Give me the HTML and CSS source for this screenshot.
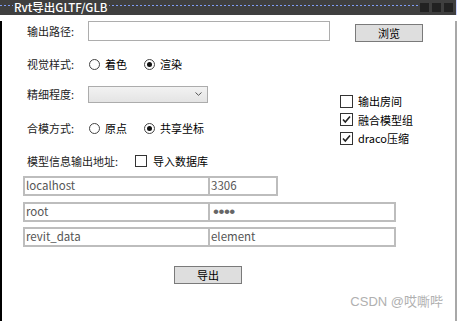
FILE: index.html
```html
<!DOCTYPE html>
<html lang="zh">
<head>
    <meta charset="UTF-8">
    <title>Rvt导出GLTF/GLB</title>
    <link rel="stylesheet" href="styles.css">
</head>
<body>
    <div class="window">
        <div class="titlebar">
            <span class="title">Rvt导出GLTF/GLB</span>
            <span class="tbtn"></span>
            <span class="tbtn"></span>
            <span class="tbtn"></span>
        </div>

        <div class="client">
            <div class="row row-path">
                <span class="label">输出路径:</span>
                <div class="textbox path-box"></div>
                <span class="btn browse-btn">浏览</span>
            </div>

            <div class="middle">
                <div class="left-col">
                    <div class="row row-style">
                        <span class="label">视觉样式:</span>
                        <span class="radio"></span><span class="opt">着色</span>
                        <span class="radio checked"></span><span class="opt">渲染</span>
                    </div>
                    <div class="row row-detail">
                        <span class="label">精细程度:</span>
                        <div class="combo">
                            <svg width="7" height="4" viewBox="0 0 7 4"><path d="M0.5 0.5 L3.5 3.3 L6.5 0.5" fill="none" stroke="#555" stroke-width="1"/></svg>
                        </div>
                    </div>
                    <div class="row row-merge">
                        <span class="label">合模方式:</span>
                        <span class="radio"></span><span class="opt">原点</span>
                        <span class="radio checked"></span><span class="opt">共享坐标</span>
                    </div>
                </div>

                <div class="right-col">
                    <div class="check-row"><span class="checkbox"></span>输出房间</div>
                    <div class="check-row"><span class="checkbox checked"><svg width="11" height="11" viewBox="0 0 11 11"><path d="M2 5.5 L4.3 8 L9 2.5" fill="none" stroke="#222" stroke-width="1.6"/></svg></span>融合模型组</div>
                    <div class="check-row"><span class="checkbox checked"><svg width="11" height="11" viewBox="0 0 11 11"><path d="M2 5.5 L4.3 8 L9 2.5" fill="none" stroke="#222" stroke-width="1.6"/></svg></span>draco压缩</div>
                </div>
            </div>

            <div class="row row-db">
                <span class="label label-wide">模型信息输出地址:</span>
                <span class="checkbox"></span><span class="opt">导入数据库</span>
            </div>

            <div class="field-row first">
                <div class="field f-left">localhost</div>
                <div class="field f-port">3306</div>
            </div>
            <div class="field-row">
                <div class="field f-left">root</div>
                <div class="field f-right dots">••••</div>
            </div>
            <div class="field-row">
                <div class="field f-left">revit_data</div>
                <div class="field f-right">element</div>
            </div>

            <div class="row row-export">
                <span class="btn export-btn">导出</span>
            </div>

            <div class="watermark">CSDN @哎嘶哔</div>
        </div>
    </div>
</body>
</html>
```

FILE: styles.css
```css
body {
    margin: 0;
    background: #fff;
    font-family: "Noto Sans CJK SC", "Noto Sans", sans-serif;
    font-size: 11px;
    color: #000;
}

.window {
    width: 457px;
    height: 321px;
}

/* title bar */
.titlebar {
    height: 15px;
    background-color: #3f3f3f;
    display: flex;
    align-items: center;
    padding-right: 3px;
    gap: 3px;
    background-image: repeating-linear-gradient(90deg, #7f9cf5 0 2px, transparent 2px 4px);
    background-size: 420px 1px;
    background-position: 0 5px;
    background-repeat: no-repeat;
    border-right: 1px solid #c9d4ff;
    box-sizing: border-box;
}

.title {
    margin-left: 13px;
    padding: 0 1px;
    background-color: #3f3f3f;
    color: #fff;
    font-size: 11.5px;
    font-weight: 500;
    line-height: 15px;
    margin-right: auto;
}

.tbtn {
    width: 9px;
    height: 9px;
    background-color: #222;
}

/* client area */
.client {
    height: 306px;
    box-sizing: border-box;
    border-left: 2px solid #000;
    border-right: 2px solid #a8a8a8;
    border-bottom: 2px solid #000;
    padding-left: 21px;
}

.row {
    display: flex;
    align-items: center;
    height: 20px;
}

.label {
    width: 61px;
    margin-left: 4px;
    flex-shrink: 0;
    color: #222;
}

.label-wide {
    width: auto;
    margin-right: 17px;
}

.row-path {
    margin-top: 6px;
}

.textbox {
    height: 20px;
    box-sizing: border-box;
    border: 1px solid #adadad;
    background: #fff;
}

.path-box {
    width: 242px;
}

.btn {
    display: flex;
    align-items: center;
    justify-content: center;
    height: 18px;
    width: 68px;
    box-sizing: border-box;
    border: 1px solid #7a7a7a;
    background-color: #dedede;
    font-size: 11px;
}

.browse-btn {
    margin-left: 25px;
    margin-top: 3px;
}

/* middle block with two columns */
.middle {
    height: 110px;
    display: flex;
}

.left-col {
    width: 317px;
}

.row-style {
    margin-top: 13px;
}

.row-detail {
    margin-top: 10px;
}

.row-merge {
    margin-top: 14px;
}

.radio {
    width: 11px;
    height: 11px;
    box-sizing: border-box;
    border: 1px solid #444;
    border-radius: 50%;
    margin-left: 1px;
    display: flex;
    align-items: center;
    justify-content: center;
    flex-shrink: 0;
}

.radio.checked::after {
    content: '';
    width: 5px;
    height: 5px;
    border-radius: 50%;
    background-color: #111;
}

.opt {
    margin-left: 5px;
    min-width: 38px;
    white-space: nowrap;
}

.combo {
    width: 120px;
    height: 17px;
    box-sizing: border-box;
    border: 1px solid #acacac;
    background: linear-gradient(#f2f2f2, #e4e4e4);
    display: flex;
    align-items: center;
    justify-content: flex-end;
    padding-right: 5px;
}

.right-col {
    margin-top: 51px;
}

.check-row {
    display: flex;
    align-items: center;
    height: 18.5px;
    white-space: nowrap;
}

.checkbox {
    width: 13px;
    height: 13px;
    box-sizing: border-box;
    border: 1px solid #333;
    background: #fff;
    margin-right: 5px;
    display: flex;
    align-items: center;
    justify-content: center;
    flex-shrink: 0;
}

.row-db .checkbox {
    width: 12px;
    height: 12px;
    margin-right: 6px;
}

.row-db .opt {
    margin-left: 0;
}

/* database fields */
.field-row {
    display: flex;
    margin-top: 6px;
}

.field-row.first {
    margin-top: 5px;
}

.field-row + .field-row + .field-row {
    margin-top: 5px;
}

.field {
    height: 20px;
    box-sizing: border-box;
    border: 2px solid #bdbdbd;
    color: #555;
    font-size: 11.5px;
    line-height: 14px;
    padding-left: 1px;
    background: #fff;
}

.f-left {
    width: 187px;
}

.f-port {
    width: 70px;
    margin-left: -2px;
}

.f-right {
    width: 188px;
    margin-left: -2px;
}

.dots {
    color: #666;
    font-family: "Liberation Sans", sans-serif;
    font-size: 17px;
    line-height: 15px;
    letter-spacing: -0.5px;
    padding-left: 3px;
}

.row-export {
    margin-top: 19px;
    height: 18px;
}

.export-btn {
    margin-left: 151px;
}

.watermark {
    margin-top: 10px;
    text-align: right;
    padding-right: 12px;
    font-family: "Liberation Sans", "Noto Sans CJK SC", sans-serif;
    font-size: 13px;
    color: #b0b0b0;
    line-height: 16px;
}
```
